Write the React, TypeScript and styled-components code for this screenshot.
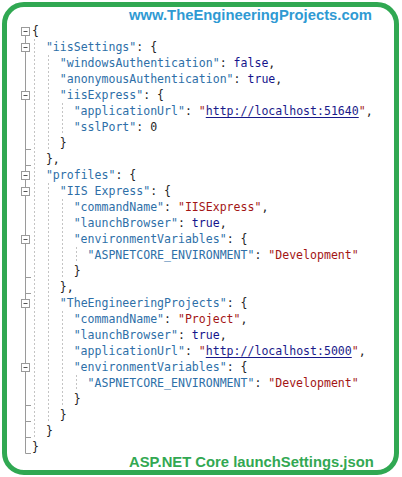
import React from "react";
import styled, { createGlobalStyle } from "styled-components";

const Global = createGlobalStyle`
  html, body { margin: 0; padding: 0; background: #ffffff; }
  #root { width: 402px; height: 477px; }
`;

const Frame = styled.div`
  box-sizing: border-box;
  margin: 2px 0 0 2px;
  width: 397px;
  height: 473px;
  border: 5px solid #30a852;
  border-radius: 22px;
  background: #ffffff;
  display: flex;
  flex-direction: column;
  overflow: hidden;
`;

const Caption = styled.div<{ $color: string }>`
  height: ${(p) => (p.$color === "blue" ? 16 : 15)}px;
  line-height: ${(p) => (p.$color === "blue" ? 16 : 15)}px;
  padding-left: 122px;
  font-family: "Liberation Sans", Arial, sans-serif;
  font-weight: 700;
  font-size: 14.8px;
  color: ${(p) => (p.$color === "blue" ? "#2f9ad3" : "#32a852")};
  white-space: nowrap;
`;

const Code = styled.div`
  display: flex;
  flex-direction: column;
  font-family: "DejaVu Sans Mono", "Liberation Mono", monospace;
  font-size: 11.55px;
`;

const Row = styled.div`
  display: grid;
  grid-template-columns: 25px 1fr;
  height: 16px;
  line-height: 16px;
`;

const Gutter = styled.svg`
  display: block;
  width: 25px;
  height: 16px;
`;

const Text = styled.div`
  white-space: pre;
  display: flex;
  align-items: stretch;
`;

const Indent = styled.span`
  display: inline-block;
  width: 2ch;
  height: 16px;
  flex: none;
  background-image: linear-gradient(to bottom, #c4c4c4 60%, transparent 60%);
  background-size: 1px 4px;
  background-repeat: repeat-y;
  background-position: 2px 0;
`;

type Kind = "p" | "k" | "kw" | "s" | "u" | "n";

const colors: Record<Kind, string> = {
  p: "#1e1e1e",
  k: "#2e6fa8",
  kw: "#14148c",
  s: "#a31515",
  u: "#1a1a8a",
  n: "#1e1e1e",
};

const Tok = styled.span<{ $kind: Kind }>`
  color: ${(p) => colors[p.$kind]};
  text-decoration: ${(p) => (p.$kind === "u" ? "underline" : "none")};
  text-underline-offset: 2px;
`;

type Line = { indent: number; toks: [Kind, string][] };

const lines: Line[] = [
  { indent: 0, toks: [["p", "{"]] },
  { indent: 1, toks: [["k", '"iisSettings"'], ["p", ": {"]] },
  { indent: 2, toks: [["k", '"windowsAuthentication"'], ["p", ": "], ["kw", "false"], ["p", ","]] },
  { indent: 2, toks: [["k", '"anonymousAuthentication"'], ["p", ": "], ["kw", "true"], ["p", ","]] },
  { indent: 2, toks: [["k", '"iisExpress"'], ["p", ": {"]] },
  { indent: 3, toks: [["k", '"applicationUrl"'], ["p", ": "], ["s", '"'], ["u", "http://localhost:51640"], ["s", '"'], ["p", ","]] },
  { indent: 3, toks: [["k", '"sslPort"'], ["p", ": "], ["n", "0"]] },
  { indent: 2, toks: [["p", "}"]] },
  { indent: 1, toks: [["p", "},"]] },
  { indent: 1, toks: [["k", '"profiles"'], ["p", ": {"]] },
  { indent: 2, toks: [["k", '"IIS Express"'], ["p", ": {"]] },
  { indent: 3, toks: [["k", '"commandName"'], ["p", ": "], ["s", '"IISExpress"'], ["p", ","]] },
  { indent: 3, toks: [["k", '"launchBrowser"'], ["p", ": "], ["kw", "true"], ["p", ","]] },
  { indent: 3, toks: [["k", '"environmentVariables"'], ["p", ": {"]] },
  { indent: 4, toks: [["k", '"ASPNETCORE_ENVIRONMENT"'], ["p", ": "], ["s", '"Development"']] },
  { indent: 3, toks: [["p", "}"]] },
  { indent: 2, toks: [["p", "},"]] },
  { indent: 2, toks: [["k", '"TheEngineeringProjects"'], ["p", ": {"]] },
  { indent: 3, toks: [["k", '"commandName"'], ["p", ": "], ["s", '"Project"'], ["p", ","]] },
  { indent: 3, toks: [["k", '"launchBrowser"'], ["p", ": "], ["kw", "true"], ["p", ","]] },
  { indent: 3, toks: [["k", '"applicationUrl"'], ["p", ": "], ["s", '"'], ["u", "http://localhost:5000"], ["s", '"'], ["p", ","]] },
  { indent: 3, toks: [["k", '"environmentVariables"'], ["p", ": {"]] },
  { indent: 4, toks: [["k", '"ASPNETCORE_ENVIRONMENT"'], ["p", ": "], ["s", '"Development"']] },
  { indent: 3, toks: [["p", "}"]] },
  { indent: 2, toks: [["p", "}"]] },
  { indent: 1, toks: [["p", "}"]] },
  { indent: 0, toks: [["p", "}"]] },
];

const LX = 18.5;
const GRAY = "#9a9a9a";

function FoldMark({ kind, first, last }: { kind: "box" | "line" | "end"; first: boolean; last: boolean }) {
  return (
    <Gutter viewBox="0 0 25 16">
      {kind === "box" && (
        <>
          {!first && <line x1={LX} y1={0} x2={LX} y2={4} stroke={GRAY} strokeWidth={1} />}
          <rect x={14.5} y={4.5} width={8} height={8} fill="#fff" stroke={GRAY} strokeWidth={1} />
          <line x1={16.5} y1={8.5} x2={20.5} y2={8.5} stroke="#555" strokeWidth={1} />
          <line x1={LX} y1={12.5} x2={LX} y2={16} stroke={GRAY} strokeWidth={1} />
        </>
      )}
      {kind === "line" && <line x1={LX} y1={0} x2={LX} y2={16} stroke={GRAY} strokeWidth={1} />}
      {kind === "end" && (
        <>
          <line x1={LX} y1={0} x2={LX} y2={last ? 14.5 : 16} stroke={GRAY} strokeWidth={1} />
          <line x1={LX} y1={14.5} x2={24} y2={14.5} stroke={GRAY} strokeWidth={1} />
        </>
      )}
    </Gutter>
  );
}

export default function App() {
  return (
    <>
      <Global />
      <Frame>
        <Caption $color="blue">www.TheEngineeringProjects.com</Caption>
        <Code>
          {lines.map((ln, i) => {
            const txt = ln.toks.map((t) => t[1]).join("");
            const kind = txt.endsWith("{") ? "box" : txt.startsWith("}") ? "end" : "line";
            return (
              <Row key={i}>
                <FoldMark kind={kind} first={i === 0} last={i === lines.length - 1} />
                <Text>
                  {Array.from({ length: ln.indent }).map((_, j) => (
                    <Indent key={j} />
                  ))}
                  <span>
                    {ln.toks.map((t, j) => (
                      <Tok key={j} $kind={t[0]}>
                        {t[1]}
                      </Tok>
                    ))}
                  </span>
                </Text>
              </Row>
            );
          })}
        </Code>
        <Caption $color="green">ASP.NET Core launchSettings.json</Caption>
      </Frame>
    </>
  );
}
